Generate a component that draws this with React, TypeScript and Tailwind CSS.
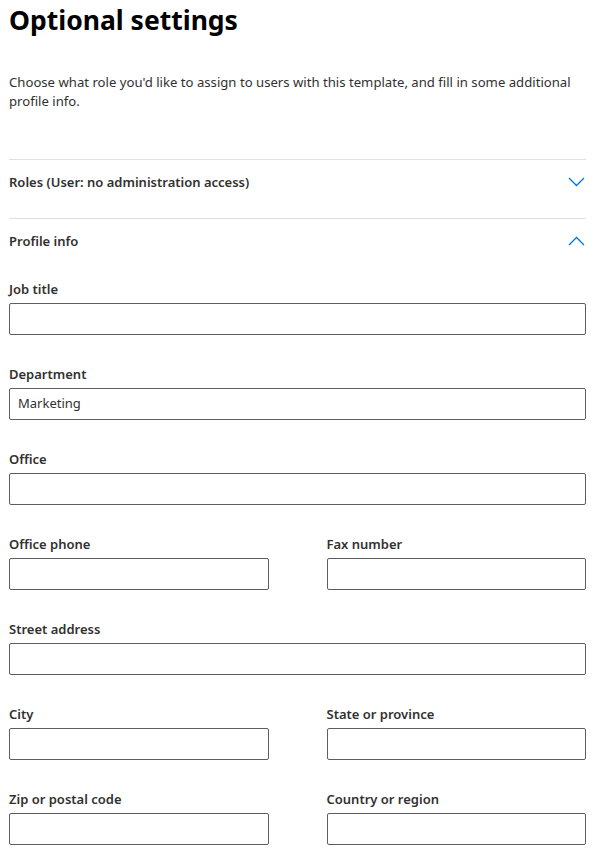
import React from "react";

const font = { fontFamily: '"Segoe UI", "Noto Sans", sans-serif' };

function Chevron({ up }: { up?: boolean }) {
  return (
    <svg width="17" height="10" viewBox="0 0 17 10" className="text-[#0078d4]">
      <path
        d={up ? "M1 9 L8.5 1.5 L16 9" : "M1 1 L8.5 8.5 L16 1"}
        fill="none"
        stroke="currentColor"
        strokeWidth="1.3"
      />
    </svg>
  );
}

function Field({ label, value }: { label: string; value?: string }) {
  return (
    <div className="flex flex-col">
      <label className="text-[13px] leading-[20px] font-semibold text-[#323130]">{label}</label>
      <div className="mt-[4px] h-[32px] border border-[#605e5c] rounded-[2px] px-[8px] flex items-center text-[13px] text-[#323130]">
        {value}
      </div>
    </div>
  );
}

export default function App() {
  return (
    <div style={font} className="w-[596px] h-[854px] overflow-hidden bg-white pl-[9px] pr-[10px]">
      <h1 className="text-[26.5px] leading-[40px] font-bold text-black">Optional settings</h1>
      <p className="mt-[33px] text-[13.15px] leading-[19px] text-[#323130]">
        Choose what role you'd like to assign to users with this template, and fill in some additional profile info.
      </p>
      <div className="mt-[48px] border-t border-[#e1dfdd]">
        <div className="flex items-center justify-between pt-[12px] pb-[26px] pr-[1px]">
          <span className="text-[13px] leading-[20px] font-semibold text-[#323130]">Roles (User: no administration access)</span>
          <Chevron />
        </div>
      </div>
      <div className="border-t border-[#e1dfdd]">
        <div className="flex items-center justify-between pt-[12px] pr-[1px]">
          <span className="text-[13px] leading-[20px] font-semibold text-[#323130]">Profile info</span>
          <Chevron up />
        </div>
        <div className="mt-[28px] grid grid-cols-2 gap-x-[58px] gap-y-[29px]">
          <div className="col-span-2"><Field label="Job title" /></div>
          <div className="col-span-2"><Field label="Department" value="Marketing" /></div>
          <div className="col-span-2"><Field label="Office" /></div>
          <Field label="Office phone" />
          <Field label="Fax number" />
          <div className="col-span-2"><Field label="Street address" /></div>
          <Field label="City" />
          <Field label="State or province" />
          <Field label="Zip or postal code" />
          <Field label="Country or region" />
        </div>
      </div>
    </div>
  );
}
